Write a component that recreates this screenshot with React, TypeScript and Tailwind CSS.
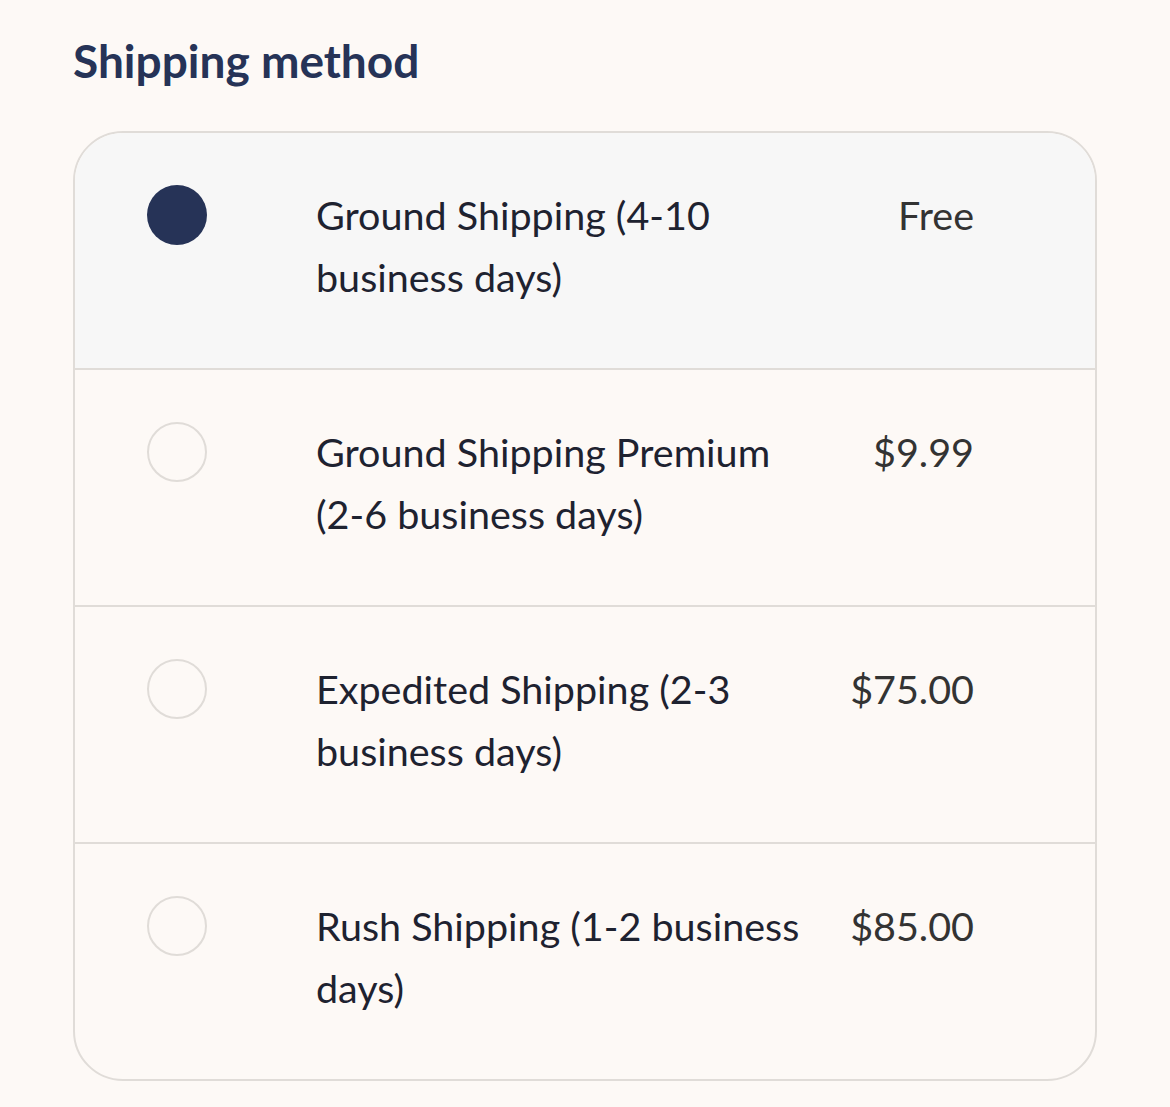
import React from "react";

const options = [
  { label: "Ground Shipping (4-10 business days)", price: "Free", selected: true },
  { label: "Ground Shipping Premium (2-6 business days)", price: "$9.99", selected: false },
  { label: "Expedited Shipping (2-3 business days)", price: "$75.00", selected: false },
  { label: "Rush Shipping (1-2 business days)", price: "$85.00", selected: false },
];

export default function App() {
  return (
    <div
      className="min-h-[1107px] w-full bg-[#fdf9f6] px-[73px] pt-[27px]"
      style={{ fontFamily: "Lato, 'Noto Sans', sans-serif" }}
    >
      <h2 className="text-[46px] font-bold leading-[68px] text-[#263357]">Shipping method</h2>
      <div className="mt-[36px] overflow-hidden rounded-[50px] border-2 border-[#e0dcd8]">
        {options.map((o, i) => (
          <div
            key={i}
            className={`flex items-start pl-[72px] pr-[121px] pt-[51px] pb-[60px] ${i > 0 ? "border-t-2 border-[#e0dcd8]" : ""} ${o.selected ? "bg-[#f7f7f7]" : ""}`}
          >
            <div className="mt-[1px] shrink-0">
              {o.selected ? (
                <div className="h-[60px] w-[60px] rounded-full bg-[#263357]" />
              ) : (
                <div className="h-[60px] w-[60px] rounded-full border-2 border-[#e0dcd8]" />
              )}
            </div>
            <div className="ml-[109px] w-[500px] text-[39.5px] leading-[62px] text-[#1e2230]">{o.label}</div>
            <div className="flex-1 text-right text-[39.5px] leading-[62px] text-[#333333]">{o.price}</div>
          </div>
        ))}
      </div>
    </div>
  );
}
